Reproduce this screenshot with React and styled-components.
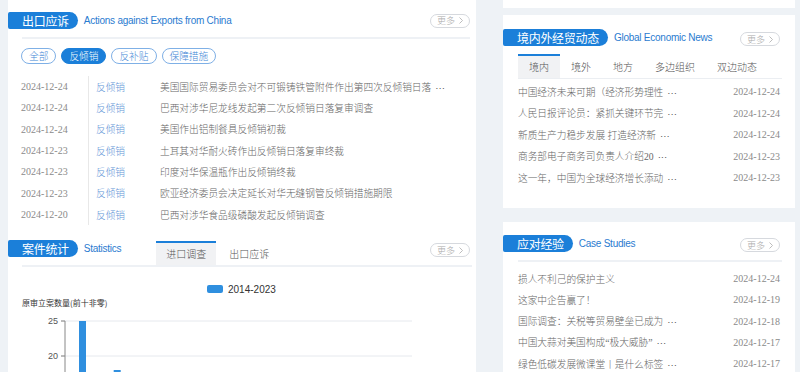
import React from 'react';
import styled, { createGlobalStyle } from 'styled-components';

const GlobalStyle = createGlobalStyle`
  body {
    margin: 0;
    background: #eef2f6;
    font-family: "Liberation Serif", "Noto Sans CJK SC", serif;
  }
`;

const Page = styled.div`
  width: 800px;
  height: 372px;
  overflow: hidden;
  box-sizing: border-box;
  padding-left: 8px;
  display: flex;
  align-items: flex-start;
  gap: 27px;
`;

const LeftPanel = styled.div`
  width: 468px;
  background: #fff;
  padding-top: 12px;
`;

const RightCol = styled.div`
  width: 292px;
  display: flex;
  flex-direction: column;
`;

const Card = styled.div`
  background: #fff;
  margin-top: ${(p) => p.$mt || 0}px;
  height: ${(p) => (p.$h ? `${p.$h}px` : 'auto')};
  padding-top: ${(p) => p.$pt || 0}px;
  box-sizing: border-box;
`;

const Header = styled.div`
  display: flex;
  align-items: ${(p) => (p.$top ? 'flex-start' : 'center')};
  height: ${(p) => p.$h || 17}px;
  padding-right: ${(p) => p.$pr}px;
`;

const Badge = styled.div`
  height: 17px;
  line-height: 17px;
  padding: 0 9px 0 14px;
  background: #1b7fd9;
  color: #fff;
  font-family: "Noto Sans CJK SC", sans-serif;
  font-size: 12px;
  letter-spacing: -0.3px;
  border-radius: 2px 9px 9px 2px;
  white-space: nowrap;
`;

const EnTitle = styled.span`
  margin-left: 6px;
  color: #2a7bd0;
  font-family: "Liberation Sans", Arial, sans-serif;
  font-size: 10px;
  letter-spacing: -0.25px;
  line-height: 17px;
  white-space: nowrap;
`;

const More = styled.div`
  margin-left: auto;
  margin-top: ${(p) => p.$mt || 0}px;
  width: 40px;
  height: 14px;
  box-sizing: border-box;
  border: 1px solid #d6d9de;
  border-radius: 8px;
  display: flex;
  align-items: center;
  justify-content: center;
  gap: 4px;
  color: #a8a8a8;
  font-family: "Noto Sans CJK SC", sans-serif;
  font-size: 9px;
  font-weight: 300;
`;

const Divider = styled.div`
  height: 2px;
  background: #eef1f5;
  margin: ${(p) => p.$m};
`;

const Pills = styled.div`
  display: flex;
  gap: 5px;
  margin: 9px 0 0 13px;
`;

const Pill = styled.div`
  height: 16px;
  box-sizing: border-box;
  padding: 0 7px;
  border-radius: 8px;
  border: 1px solid ${(p) => (p.$active ? '#1b7fd9' : '#7fb0e6')};
  background: ${(p) => (p.$active ? '#1b7fd9' : '#fff')};
  color: ${(p) => (p.$active ? '#fff' : '#3f87d6')};
  font-family: "Noto Sans CJK SC", sans-serif;
  font-size: 9.7px;
  font-weight: 300;
  line-height: 14px;
`;

const CaseList = styled.div`
  margin: 12px 0 0 13px;
`;

const CaseRow = styled.div`
  display: grid;
  grid-template-columns: 67px 72px 1fr;
  height: 21.33px;
  align-items: center;
  font-size: 9.7px;
  font-weight: 300;
`;

const DateCell = styled.span`
  color: #8a8a8a;
  font-size: 10px;
  font-weight: 400;
`;

const TypeCell = styled.span`
  height: 100%;
  display: flex;
  align-items: center;
  padding-left: 7px;
  border-left: 1px solid #e8e8e8;
  color: #5d93d6;
`;

const TitleCell = styled.span`
  color: #666;
  font-weight: 300;
  white-space: nowrap;
`;

const Dots = styled.span`
  margin-left: 4px;
  color: #555;
  font-family: "Liberation Sans", sans-serif;
  font-weight: 400;
`;

const StatHeader = styled(Header)`
  margin-top: 15px;
`;

const TabBar = styled.div`
  display: flex;
  margin: ${(p) => p.$m};
  height: 24px;
  border-bottom: ${(p) => (p.$line ? '1px solid #ebeef2' : 'none')};
`;

const Tab = styled.div`
  padding: 0 ${(p) => p.$px}px;
  height: 24px;
  box-sizing: border-box;
  border-top: 2px solid ${(p) => (p.$active ? '#1b7fd9' : 'transparent')};
  background: ${(p) => (p.$active ? '#f1f2f4' : 'transparent')};
  color: #555;
  font-family: "Noto Sans CJK SC", sans-serif;
  font-size: 10px;
  font-weight: 300;
  line-height: 22px;
  white-space: nowrap;
`;

const NewsList = styled.div`
  margin: ${(p) => p.$mt}px 15px 0 15px;
`;

const NewsRow = styled.div`
  display: flex;
  justify-content: space-between;
  align-items: center;
  height: ${(p) => p.$h}px;
  font-size: 9.7px;
`;

const Chart = styled.svg`
  display: block;
  margin-top: 1px;
`;

const Chevron = () => (
  <svg width="4" height="7" viewBox="0 0 4 7">
    <path d="M0.5 0.5 L3.5 3.5 L0.5 6.5" fill="none" stroke="#b5b5b5" strokeWidth="0.9" />
  </svg>
);

const MoreBtn = ({ mt }) => (
  <More $mt={mt}>
    更多
    <Chevron />
  </More>
);

const exportCases = [
  ['2024-12-24', '反倾销', '美国国际贸易委员会对不可锻铸铁管附件作出第四次反倾销日落', true],
  ['2024-12-24', '反倾销', '巴西对涉华尼龙线发起第二次反倾销日落复审调查'],
  ['2024-12-24', '反倾销', '美国作出铝制餐具反倾销初裁'],
  ['2024-12-23', '反倾销', '土耳其对华耐火砖作出反倾销日落复审终裁'],
  ['2024-12-23', '反倾销', '印度对华保温瓶作出反倾销终裁'],
  ['2024-12-23', '反倾销', '欧亚经济委员会决定延长对华无缝钢管反倾销措施期限'],
  ['2024-12-20', '反倾销', '巴西对涉华食品级磷酸发起反倾销调查'],
];

const news = [
  ['中国经济未来可期（经济形势理性', '2024-12-24'],
  ['人民日报评论员：紧抓关键环节完', '2024-12-24'],
  ['新质生产力稳步发展 打造经济新', '2024-12-24'],
  ['商务部电子商务司负责人介绍20', '2024-12-23'],
  ['这一年，中国为全球经济增长添动', '2024-12-23'],
];

const studies = [
  ['损人不利己的保护主义', '2024-12-24'],
  ['这家中企告赢了！', '2024-12-19'],
  ['国际调查：关税等贸易壁垒已成为', '2024-12-18', true],
  ['中国大蒜对美国构成“极大威胁”', '2024-12-17', true],
  ['绿色低碳发展微课堂丨是什么标签', '2024-12-17', true],
];

const barValues = [25, 18, 12, 10, 9, 7, 6, 5, 4, 3];

function StatChart() {
  const x0 = 57;
  const band = 34.7;
  const yTop = 53;
  const unit = 7;
  const height = 104;
  const ticks = [25, 20];
  return (
    <Chart width="468" height={height}>
      <rect x="199" y="17" width="16" height="8" rx="2" fill="#2f8fdf" />
      <text x="220" y="24.5" fontSize="10" fill="#333" fontFamily="Liberation Sans, sans-serif">2014-2023</text>
      <text x="14" y="38" fontSize="8" fill="#333" fontFamily="Noto Sans CJK SC, sans-serif">原审立案数量(前十非零)</text>
      {ticks.map((t) => {
        const y = yTop + (25 - t) * unit;
        return (
          <g key={t}>
            <line x1={x0} x2="404" y1={y} y2={y} stroke="#e6e9ee" strokeWidth="1" />
            <line x1={x0 - 4} x2={x0} y1={y} y2={y} stroke="#777" strokeWidth="1" />
            <text x={x0 - 7} y={y + 3} fontSize="9" fill="#555" textAnchor="end" fontFamily="Liberation Sans, sans-serif">{t}</text>
          </g>
        );
      })}
      <line x1={x0} x2={x0} y1={yTop} y2={height} stroke="#888" strokeWidth="1" />
      {barValues.map((v, i) => (
        <rect
          key={i}
          x={x0 + band * i + 14}
          y={yTop + (25 - v) * unit}
          width="7"
          height={v * unit}
          fill="#2f8fdf"
        />
      ))}
    </Chart>
  );
}

export default function App() {
  return (
    <>
      <GlobalStyle />
      <Page>
        <LeftPanel>
          <Header $pr={6}>
            <Badge>出口应诉</Badge>
            <EnTitle>Actions against Exports from China</EnTitle>
            <MoreBtn />
          </Header>
          <Divider $m="8px 6px 0 14px" />
          <Pills>
            <Pill>全部</Pill>
            <Pill $active>反倾销</Pill>
            <Pill>反补贴</Pill>
            <Pill>保障措施</Pill>
          </Pills>
          <CaseList>
            {exportCases.map(([date, type, title, cut], i) => (
              <CaseRow key={i}>
                <DateCell>{date}</DateCell>
                <TypeCell>{type}</TypeCell>
                <TitleCell>
                  {title}
                  {cut && <Dots>···</Dots>}
                </TitleCell>
              </CaseRow>
            ))}
          </CaseList>
          <StatHeader $pr={6} $h={25} $top>
            <Badge>案件统计</Badge>
            <EnTitle>Statistics</EnTitle>
            <TabBar $m="1px 0 0 35px">
              <Tab $active $px={10}>进口调查</Tab>
              <Tab $px={13}>出口应诉</Tab>
            </TabBar>
            <MoreBtn mt={3} />
          </StatHeader>
          <Divider $m="0 4px 0 14px" />
          <StatChart />
        </LeftPanel>
        <RightCol>
          <Card $h={8} />
          <Card $mt={7} $h={193} $pt={14}>
            <Header $pr={15}>
              <Badge>境内外经贸动态</Badge>
              <EnTitle>Global Economic News</EnTitle>
              <MoreBtn mt={3} />
            </Header>
            <TabBar $m="8px 13px 0 15px" $line>
              <Tab $active $px={11}>境内</Tab>
              <Tab $px={11}>境外</Tab>
              <Tab $px={11}>地方</Tab>
              <Tab $px={11}>多边组织</Tab>
              <Tab $px={11}>双边动态</Tab>
            </TabBar>
            <NewsList $mt={2}>
              {news.map(([title, date], i) => (
                <NewsRow key={i} $h={21.5}>
                  <TitleCell>
                    {title}
                    <Dots>···</Dots>
                  </TitleCell>
                  <DateCell>{date}</DateCell>
                </NewsRow>
              ))}
            </NewsList>
          </Card>
          <Card $mt={14} $pt={13} $h={160}>
            <Header $pr={15}>
              <Badge>应对经验</Badge>
              <EnTitle>Case Studies</EnTitle>
              <MoreBtn mt={3} />
            </Header>
            <Divider $m="8px 13px 0 15px" />
            <NewsList $mt={6}>
              {studies.map(([title, date, cut], i) => (
                <NewsRow key={i} $h={21.25}>
                  <TitleCell>
                    {title}
                    {cut && <Dots>···</Dots>}
                  </TitleCell>
                  <DateCell>{date}</DateCell>
                </NewsRow>
              ))}
            </NewsList>
          </Card>
        </RightCol>
      </Page>
    </>
  );
}
